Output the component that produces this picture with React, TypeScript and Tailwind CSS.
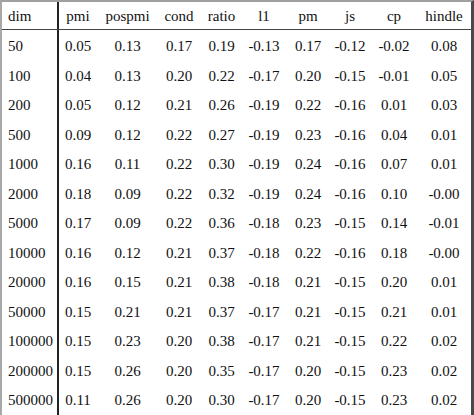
const header = ["pmi", "pospmi", "cond", "ratio", "l1", "pm", "js", "cp", "hindle"];

// widths of the value columns, left to right
const widths = [
  "w-[38px]",
  "w-[61px]",
  "w-[42px]",
  "w-[43px]",
  "w-[42px]",
  "w-[46px]",
  "w-[38px]",
  "w-[50px]",
  "w-[50px]",
];

const rows = [
  ["50", "0.05", "0.13", "0.17", "0.19", "-0.13", "0.17", "-0.12", "-0.02", "0.08"],
  ["100", "0.04", "0.13", "0.20", "0.22", "-0.17", "0.20", "-0.15", "-0.01", "0.05"],
  ["200", "0.05", "0.12", "0.21", "0.26", "-0.19", "0.22", "-0.16", "0.01", "0.03"],
  ["500", "0.09", "0.12", "0.22", "0.27", "-0.19", "0.23", "-0.16", "0.04", "0.01"],
  ["1000", "0.16", "0.11", "0.22", "0.30", "-0.19", "0.24", "-0.16", "0.07", "0.01"],
  ["2000", "0.18", "0.09", "0.22", "0.32", "-0.19", "0.24", "-0.16", "0.10", "-0.00"],
  ["5000", "0.17", "0.09", "0.22", "0.36", "-0.18", "0.23", "-0.15", "0.14", "-0.01"],
  ["10000", "0.16", "0.12", "0.21", "0.37", "-0.18", "0.22", "-0.16", "0.18", "-0.00"],
  ["20000", "0.16", "0.15", "0.21", "0.38", "-0.18", "0.21", "-0.15", "0.20", "0.01"],
  ["50000", "0.15", "0.21", "0.21", "0.37", "-0.17", "0.21", "-0.15", "0.21", "0.01"],
  ["100000", "0.15", "0.23", "0.20", "0.38", "-0.17", "0.21", "-0.15", "0.22", "0.02"],
  ["200000", "0.15", "0.26", "0.20", "0.35", "-0.17", "0.20", "-0.15", "0.23", "0.02"],
  ["500000", "0.11", "0.26", "0.20", "0.30", "-0.17", "0.20", "-0.15", "0.23", "0.02"],
];

const serif = { fontFamily: "Liberation Serif" };

const App = () => {
  return (
    <div
      style={serif}
      className="w-[474px] h-[415px] overflow-hidden bg-white text-[#111] text-[15px] border-l-2 border-t-2 border-r-[3px] border-l-[#a8a8a8] border-t-[#a0a0a0] border-r-[#4a4a4a]"
    >
      <div className="flex h-[28px] leading-[28px] border-b border-[#444]">
        <div style={serif} className="w-[57px] pl-[6px] border-r-2 border-[#222] font-['Liberation_Serif']">
          dim
        </div>
        {header.map((e, i) => (
          <div
            key={i}
            style={serif}
            className={`${widths[i]} text-center whitespace-nowrap font-['Liberation_Serif']`}
          >
            {e}
          </div>
        ))}
      </div>
      <div className="flex flex-col">
        <div className="flex h-[2px]">
          <div className="w-[57px] border-r-2 border-[#222]"></div>
        </div>
        {rows.map((r, i) => (
          <div key={i} className="flex h-[29.5px] leading-[29.5px]">
            <div style={serif} className="w-[57px] pl-[6px] border-r-2 border-[#222] font-['Liberation_Serif']">
              {r[0]}
            </div>
            {r.slice(1).map((v, j) => (
              <div
                key={j}
                style={serif}
                className={`${widths[j]} text-center whitespace-nowrap font-['Liberation_Serif']`}
              >
                {v}
              </div>
            ))}
          </div>
        ))}
      </div>
    </div>
  );
};

export default App;
